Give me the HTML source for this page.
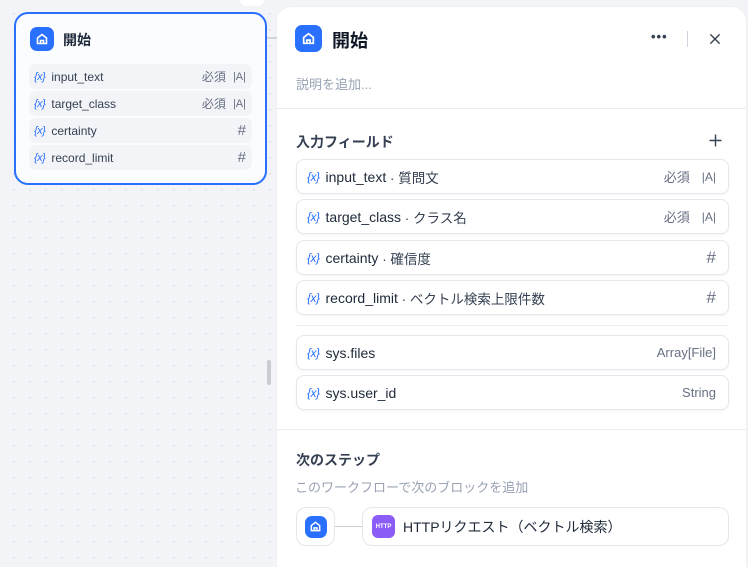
<!DOCTYPE html>
<html><head><meta charset="utf-8"><style>
*{box-sizing:border-box;margin:0;padding:0}
body{width:748px;height:560px;overflow:hidden;position:relative;background:#f2f4f7;background-image:radial-gradient(#e1e4e9 1px,transparent 1.2px);background-size:16px 16px;background-position:6px 6px;font-family:"Liberation Sans","Noto Sans CJK JP",sans-serif;color:#1d2939}
.abs{position:absolute}
.node{left:14px;top:12px;width:253px;height:173px;border:2px solid #2970ff;border-radius:14px;background:#fbfcfe}
.ic{background:#2970ff;border-radius:7px;display:flex;align-items:center;justify-content:center}
.nrow{position:absolute;left:13px;width:223px;height:25px;background:#f2f4f7;border-radius:7px;font-size:12px;display:flex;align-items:center;padding:0 6px 0 5px;color:#354052}
.x{color:#2970ff;font-size:11px;font-style:italic;margin-right:6px;letter-spacing:-0.5px}
.r{margin-left:auto;color:#676f83;display:flex;gap:7px;align-items:center}
.panel{left:277px;top:7px;width:469px;height:560px;background:#fff;border-radius:14px 14px 0 0;box-shadow:0 0 2px rgba(0,0,0,.06)}
.f{position:absolute;left:19px;width:433px;height:35px;border:1px solid #e4e7ec;border-radius:8px;box-shadow:0 1px 2px rgba(16,24,40,.05);display:flex;align-items:center;padding:0 12px 0 10px;font-size:14px;color:#1d2939}
.f .x{font-size:12px}
.f .d{color:#354052;font-size:13.5px}
.f .r{font-size:13px;gap:12px}
.hr{position:absolute;left:0;width:469px;height:1px;background:#eaecf0}
</style></head><body>
<div class="abs" style="left:240px;top:-8px;width:24px;height:14px;background:#fff;border-radius:6px"></div>
<div class="abs" style="left:267px;top:37px;width:10px;height:2px;background:#d0d5dd"></div>
<div class="abs" style="left:267px;top:360px;width:4px;height:25px;background:#c8ccd3;border-radius:2px"></div>
<div class="abs node">
 <div class="abs ic" style="left:14px;top:13px;width:24px;height:24px"><svg width="14" height="14" viewBox="0 0 14 14" fill="none" stroke="#fff" stroke-width="1.6"><path d="M2.5 6L7 2.5 11.5 6V11.5H2.5Z"/><path d="M5.5 11.5V8.5H8.5V11.5"/></svg></div>
 <div class="abs" style="left:47px;top:16px;font-size:14px;font-weight:bold;color:#1d2939">開始</div>
 <div class="nrow" style="top:50px"><span class="x">{x}</span>input_text<span class="r">必須 <b style="font-weight:normal;font-size:11px">|A|</b></span></div>
 <div class="nrow" style="top:77px"><span class="x">{x}</span>target_class<span class="r">必須 <b style="font-weight:normal;font-size:11px">|A|</b></span></div>
 <div class="nrow" style="top:104px"><span class="x">{x}</span>certainty<span class="r" style="font-size:15px">#</span></div>
 <div class="nrow" style="top:131px"><span class="x">{x}</span>record_limit<span class="r" style="font-size:15px">#</span></div>
</div>
<div class="abs panel">
 <div class="abs ic" style="left:18px;top:18px;width:27px;height:27px"><svg width="15" height="15" viewBox="0 0 14 14" fill="none" stroke="#fff" stroke-width="1.6"><path d="M2.5 6L7 2.5 11.5 6V11.5H2.5Z"/><path d="M5.5 11.5V8.5H8.5V11.5"/></svg></div>
 <div class="abs" style="left:55px;top:20px;font-size:18px;font-weight:bold;color:#101828">開始</div>
 <div class="abs" style="left:374px;top:22px;font-size:13px;font-weight:bold;color:#354052;letter-spacing:1px">•••</div>
 <div class="abs" style="left:410px;top:24px;width:1px;height:16px;background:#d0d5dd"></div>
 <div class="abs" style="left:432px;top:25px"><svg width="12" height="12" viewBox="0 0 13 13" stroke="#354052" stroke-width="1.5"><path d="M1.5 1.5L11.5 11.5M11.5 1.5L1.5 11.5"/></svg></div>
 <div class="abs" style="left:19px;top:67px;font-size:13px;color:#98a2b3">説明を追加...</div>
 <div class="hr" style="top:101px"></div>
 <div class="abs" style="left:19px;top:125px;font-size:14px;font-weight:bold;color:#354052">入力フィールド</div>
 <div class="abs" style="left:432px;top:127px"><svg width="13" height="13" viewBox="0 0 13 13" stroke="#354052" stroke-width="1.4"><path d="M6.5 0.5V12.5M0.5 6.5H12.5"/></svg></div>
 <div class="f" style="top:152px"><span class="x">{x}</span>input_text<span class="d">&nbsp;· 質問文</span><span class="r">必須 <b style="font-weight:normal;font-size:12px">|A|</b></span></div>
 <div class="f" style="top:192px"><span class="x">{x}</span>target_class<span class="d">&nbsp;· クラス名</span><span class="r">必須 <b style="font-weight:normal;font-size:12px">|A|</b></span></div>
 <div class="f" style="top:233px"><span class="x">{x}</span>certainty<span class="d">&nbsp;· 確信度</span><span class="r" style="font-size:17px">#</span></div>
 <div class="f" style="top:273px"><span class="x">{x}</span>record_limit<span class="d">&nbsp;· ベクトル検索上限件数</span><span class="r" style="font-size:17px">#</span></div>
 <div class="abs" style="left:19px;top:318px;width:433px;height:1px;background:#eaecf0"></div>
 <div class="f" style="top:328px"><span class="x">{x}</span>sys.files<span class="r">Array[File]</span></div>
 <div class="f" style="top:368px"><span class="x">{x}</span>sys.user_id<span class="r">String</span></div>
 <div class="hr" style="top:422px"></div>
 <div class="abs" style="left:19px;top:443px;font-size:14px;font-weight:bold;color:#354052">次のステップ</div>
 <div class="abs" style="left:18px;top:470px;font-size:13px;color:#98a2b3">このワークフローで次のブロックを追加</div>
 <div class="abs" style="left:19px;top:500px;width:39px;height:39px;border:1px solid #e4e7ec;border-radius:10px;display:flex;align-items:center;justify-content:center"><div class="ic" style="width:22px;height:22px"><svg width="13" height="13" viewBox="0 0 14 14" fill="none" stroke="#fff" stroke-width="1.6"><path d="M2.5 6L7 2.5 11.5 6V11.5H2.5Z"/><path d="M5.5 11.5V8.5H8.5V11.5"/></svg></div></div>
 <div class="abs" style="left:58px;top:519px;width:27px;height:1px;background:#c8ccd3"></div>
 <div class="abs" style="left:85px;top:500px;width:367px;height:39px;border:1px solid #e4e7ec;border-radius:10px;display:flex;align-items:center;padding-left:9px;font-size:14px;color:#1d2939"><div style="width:23px;height:23px;background:#8b5cf6;border-radius:6px;color:#fff;font-size:6px;font-weight:bold;display:flex;align-items:center;justify-content:center;margin-right:8px">HTTP</div>HTTPリクエスト（ベクトル検索）</div>
</div>
</body></html>
